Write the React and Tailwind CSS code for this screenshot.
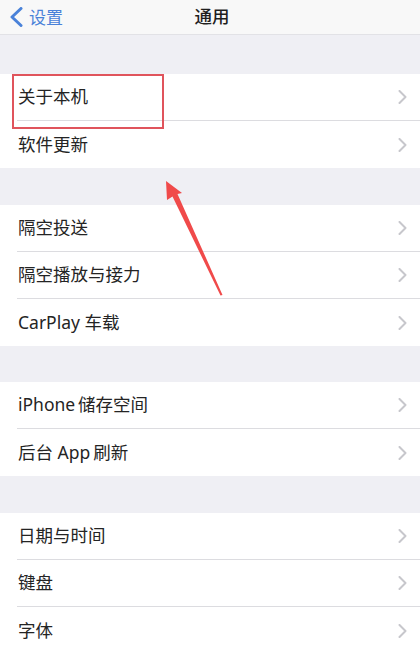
import React from "react";

const font = { fontFamily: '"Noto Sans", "Noto Sans CJK SC", sans-serif' };

function Chevron() {
  return (
    <svg width="9" height="14" viewBox="0 0 9 14" className="shrink-0">
      <polyline points="1.5,1 7.5,7 1.5,13" fill="none" stroke="#c7c7cc" strokeWidth="2" strokeLinecap="round" strokeLinejoin="round" />
    </svg>
  );
}

function Row({ label, last }) {
  return (
    <div className="h-[47px] bg-white pl-[17px]">
      <div className={`h-full flex items-center justify-between pr-[13px] ${last ? "" : "border-b border-[#dcdce0]"}`}>
        <span className="text-[17.5px] text-[#242424] pl-[1px] leading-none">{label}</span>
        <Chevron />
      </div>
    </div>
  );
}

function Group({ items }) {
  return (
    <div className="flex flex-col">
      {items.map((t, i) => (
        <Row key={t} label={t} last={i === items.length - 1} />
      ))}
    </div>
  );
}

export default function App() {
  return (
    <div className="relative w-[420px] h-[646px] overflow-hidden bg-[#efeff4]" style={font}>
      <div className="h-[35px] bg-[#f8f8f8] border-b border-[#e2e2e6] flex items-center relative">
        <div className="flex items-center pl-[9px] gap-[5px]">
          <svg width="15" height="20" viewBox="0 0 15 20">
            <polyline points="12,1.5 3,10 12,18.5" fill="none" stroke="#4a82d9" strokeWidth="3" strokeLinecap="round" strokeLinejoin="round" />
          </svg>
          <span className="text-[17px] text-[#4a82d9] leading-none">设置</span>
        </div>
        <div className="absolute inset-0 flex items-center justify-center pl-[4px]">
          <span className="text-[17.5px] text-[#1f1f1f] font-medium leading-none">通用</span>
        </div>
      </div>
      <div className="h-[39px]" />
      <Group items={["关于本机", "软件更新"]} />
      <div className="h-[37px]" />
      <Group items={["隔空投送", "隔空播放与接力", "CarPlay 车载"]} />
      <div className="h-[36px]" />
      <Group items={["iPhone\u2009储存空间", "后台 App\u2009刷新"]} />
      <div className="h-[37px]" />
      <Group items={["日期与时间", "键盘", "字体"]} />

      <div className="absolute left-[12px] top-[74px] w-[152px] h-[55px] border-2 border-[#e0545c]" />
      <svg className="absolute left-0 top-0" width="420" height="646" viewBox="0 0 420 646">
        <polygon
          points="166,181 182,193 177.5,194 222.5,295 220.5,295.5 172.5,196.5 167,200"
          fill="#f04a4a"
        />
      </svg>
    </div>
  );
}
